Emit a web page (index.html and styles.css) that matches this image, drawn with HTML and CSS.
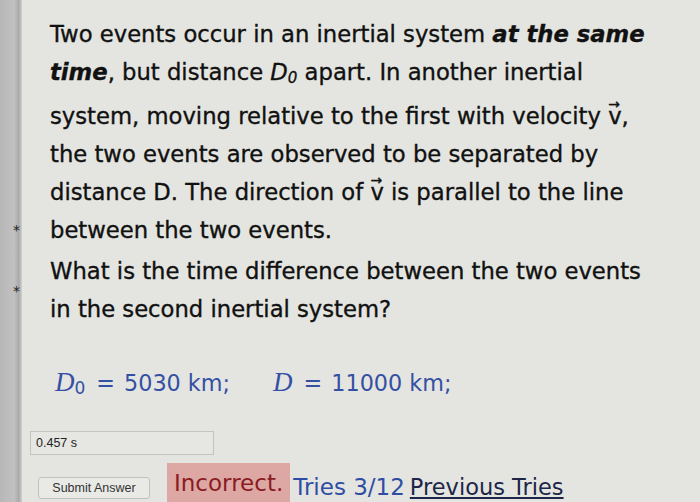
FILE: index.html
```html
<!DOCTYPE html>
<html>
<head>
<meta charset="utf-8">
<link rel="stylesheet" href="styles.css">
</head>
<body>
<div class="screen">
  <div class="edge">
    <span class="star s1">*</span>
    <span class="star s2">*</span>
  </div>
  <div class="main">
    <div class="problem">
      <p class="para">
        <span class="ln">Two events occur in an inertial system <b><i>at the same</i></b></span>
        <span class="ln"><b><i>time</i></b>, but distance <i class="dz">D<sub>0</sub></i> apart. In another inertial</span>
        <span class="ln">system, moving relative to the first with velocity <span class="vec">v</span>,</span>
        <span class="ln">the two events are observed to be separated by</span>
        <span class="ln">distance D. The direction of <span class="vec">v</span> is parallel to the line</span>
        <span class="ln">between the two events.</span>
      </p>
      <p class="para q">
        <span class="ln">What is the time difference between the two events</span>
        <span class="ln">in the second inertial system?</span>
      </p>
    </div>
    <div class="eq">
      <span class="mi">D</span><span class="sub">0</span><span class="op">=</span><span>5030 km;</span>
      <span class="mi second">D</span><span class="op">=</span><span>11000 km;</span>
    </div>
    <div class="answer">
      <div class="input">0.457 s</div>
    </div>
    <div class="submitrow">
      <button class="btn">Submit Answer</button>
      <span class="incorrect">Incorrect.</span>
      <span class="tries">Tries 3/12</span>
      <a class="prev">Previous Tries</a>
    </div>
  </div>
</div>
</body>
</html>
```
FILE: styles.css
```css
html, body {
  margin: 0;
  padding: 0;
  background: #e3e4df;
}
.screen {
  width: 700px;
  height: 502px;
  display: flex;
  overflow: hidden;
  background: #e4e5e0;
}
.edge {
  width: 22px;
  flex: none;
  background: linear-gradient(to right, #b6b7b6 0, #c0c1c0 14px, #a8a9a9 19px, #d2d3cf 22px);
  position: relative;
}
.star {
  position: absolute;
  left: 13px;
  font: 14px "DejaVu Sans", sans-serif;
  color: #222;
}
.s1 { top: 222px; }
.s2 { top: 283px; }
.main {
  flex: 1;
  display: flex;
  flex-direction: column;
}
.problem {
  padding: 15px 0 0 28px;
  font-family: "DejaVu Sans", sans-serif;
  font-size: 22.7px;
  color: #111;
  -webkit-text-stroke: 0.35px #111;
}
.para {
  margin: 0;
}
.para.q {
  margin-top: 3px;
}
.ln {
  display: block;
  line-height: 38px;
  white-space: nowrap;
}
.dz sub {
  font-size: 15px;
  vertical-align: -3px;
}
.vec {
  position: relative;
  display: inline-block;
}
.vec::before {
  content: "\2192";
  position: absolute;
  left: 0;
  top: -12px;
  font-size: 14px;
}
.eq {
  margin: 39px 0 0 33px;
  font-family: "DejaVu Sans", sans-serif;
  font-size: 22.3px;
  color: #3450a4;
  white-space: nowrap;
}
.mi {
  font-family: "Liberation Serif", serif;
  font-style: italic;
  font-size: 27px;
}
.mi.second {
  margin-left: 36px;
}
.sub {
  font-size: 17px;
  vertical-align: -3px;
}
.op {
  margin: 0 9px 0 11px;
}
.answer {
  margin: 33px 0 0 8px;
}
.input {
  width: 177px;
  height: 22px;
  border: 1px solid #c3c4c0;
  background: #e6e7e3;
  font: 12.5px "Liberation Sans", sans-serif;
  color: #222;
  line-height: 22px;
  padding-left: 5px;
}
.submitrow {
  margin: 8px 0 0 16px;
  display: flex;
  align-items: flex-end;
  white-space: nowrap;
}
.btn {
  width: 112px;
  height: 22px;
  margin-bottom: 4px;
  border: 1px solid #c2c3c0;
  border-radius: 3px;
  background: #e9eae6;
  font: 12.5px "Liberation Sans", sans-serif;
  color: #333;
  padding: 0;
}
.incorrect {
  margin-left: 17px;
  background: #dda7a4;
  color: #8a1c22;
  font: 23px "DejaVu Sans", sans-serif;
  padding: 6px 7px 6px 7px;
  line-height: 28px;
}
.tries {
  margin-left: 3px;
  font: 23px "DejaVu Sans", sans-serif;
  color: #2f4da3;
  line-height: 28px;
  padding-bottom: 2px;
}
.prev {
  margin-left: 5px;
  font: 22.5px "DejaVu Sans", sans-serif;
  color: #1d2548;
  text-decoration: underline;
  line-height: 28px;
  padding-bottom: 2px;
}
```
